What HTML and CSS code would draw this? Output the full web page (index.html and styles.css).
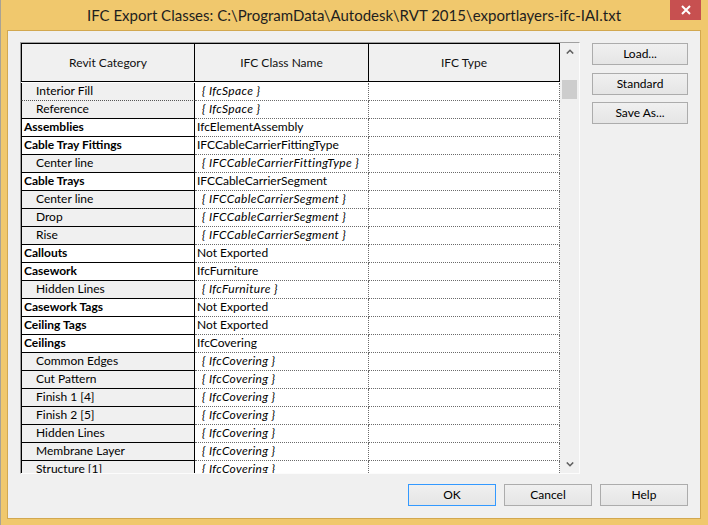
FILE: index.html
```html
<!DOCTYPE html>
<html>
<head>
<meta charset="utf-8">
<link rel="stylesheet" href="styles.css">
</head>
<body>
<div class="window">
  <div class="titlebar">
    <span class="title">IFC Export Classes: C:\ProgramData\Autodesk\RVT 2015\exportlayers-ifc-IAI.txt</span>
    <div class="close">
      <svg width="10" height="10" viewBox="0 0 10 10"><path d="M1 1 L9 9 M9 1 L1 9" stroke="#fff" stroke-width="2"/></svg>
    </div>
  </div>
  <div class="client">
    <div class="main">
      <div class="grid">
        <div class="table">
          <div class="head">
            <div class="hc c1">Revit Category</div>
            <div class="hc c2">IFC Class Name</div>
            <div class="hc c3">IFC Type</div>
          </div>
          <div class="body">
            <div class="row child first"><div class="cell c1">Interior Fill</div><div class="cell c2 inh">{ IfcSpace }</div><div class="cell c3"></div></div>
            <div class="row child"><div class="cell c1">Reference</div><div class="cell c2 inh">{ IfcSpace }</div><div class="cell c3"></div></div>
            <div class="row parent"><div class="cell c1">Assemblies</div><div class="cell c2">IfcElementAssembly</div><div class="cell c3"></div></div>
            <div class="row parent"><div class="cell c1">Cable Tray Fittings</div><div class="cell c2">IFCCableCarrierFittingType</div><div class="cell c3"></div></div>
            <div class="row child"><div class="cell c1">Center line</div><div class="cell c2 inh">{ IFCCableCarrierFittingType }</div><div class="cell c3"></div></div>
            <div class="row parent"><div class="cell c1">Cable Trays</div><div class="cell c2">IFCCableCarrierSegment</div><div class="cell c3"></div></div>
            <div class="row child"><div class="cell c1">Center line</div><div class="cell c2 inh">{ IFCCableCarrierSegment }</div><div class="cell c3"></div></div>
            <div class="row child"><div class="cell c1">Drop</div><div class="cell c2 inh">{ IFCCableCarrierSegment }</div><div class="cell c3"></div></div>
            <div class="row child"><div class="cell c1">Rise</div><div class="cell c2 inh">{ IFCCableCarrierSegment }</div><div class="cell c3"></div></div>
            <div class="row parent"><div class="cell c1">Callouts</div><div class="cell c2">Not Exported</div><div class="cell c3"></div></div>
            <div class="row parent"><div class="cell c1">Casework</div><div class="cell c2">IfcFurniture</div><div class="cell c3"></div></div>
            <div class="row child"><div class="cell c1">Hidden Lines</div><div class="cell c2 inh">{ IfcFurniture }</div><div class="cell c3"></div></div>
            <div class="row parent"><div class="cell c1">Casework Tags</div><div class="cell c2">Not Exported</div><div class="cell c3"></div></div>
            <div class="row parent"><div class="cell c1">Ceiling Tags</div><div class="cell c2">Not Exported</div><div class="cell c3"></div></div>
            <div class="row parent"><div class="cell c1">Ceilings</div><div class="cell c2">IfcCovering</div><div class="cell c3"></div></div>
            <div class="row child"><div class="cell c1">Common Edges</div><div class="cell c2 inh">{ IfcCovering }</div><div class="cell c3"></div></div>
            <div class="row child"><div class="cell c1">Cut Pattern</div><div class="cell c2 inh">{ IfcCovering }</div><div class="cell c3"></div></div>
            <div class="row child"><div class="cell c1">Finish 1 [4]</div><div class="cell c2 inh">{ IfcCovering }</div><div class="cell c3"></div></div>
            <div class="row child"><div class="cell c1">Finish 2 [5]</div><div class="cell c2 inh">{ IfcCovering }</div><div class="cell c3"></div></div>
            <div class="row child"><div class="cell c1">Hidden Lines</div><div class="cell c2 inh">{ IfcCovering }</div><div class="cell c3"></div></div>
            <div class="row child"><div class="cell c1">Membrane Layer</div><div class="cell c2 inh">{ IfcCovering }</div><div class="cell c3"></div></div>
            <div class="row child"><div class="cell c1">Structure [1]</div><div class="cell c2 inh">{ IfcCovering }</div><div class="cell c3"></div></div>
          </div>
        </div>
        <div class="vscroll">
          <div class="sbtn"><svg width="8" height="5" viewBox="0 0 8 5"><path d="M0.8 4.5 L4 1.3 L7.2 4.5" fill="none" stroke="#606060" stroke-width="1.6"/></svg></div>
          <div class="track"><div class="thumb"></div></div>
          <div class="sbtn"><svg width="8" height="5" viewBox="0 0 8 5"><path d="M0.8 0.5 L4 3.7 L7.2 0.5" fill="none" stroke="#606060" stroke-width="1.6"/></svg></div>
        </div>
      </div>
      <div class="side">
        <button class="btn side-btn">Load...</button>
        <button class="btn side-btn">Standard</button>
        <button class="btn side-btn">Save As...</button>
      </div>
    </div>
    <div class="footer">
      <button class="btn foot-btn default">OK</button>
      <button class="btn foot-btn">Cancel</button>
      <button class="btn foot-btn">Help</button>
    </div>
  </div>
</div>
</body>
</html>
```
FILE: styles.css
```css
html, body {
  margin: 0;
  padding: 0;
  background: #f0c86d;
}
body {
  font-family: Lato, "Noto Sans", sans-serif;
  font-size: 12px;
  color: #000;
}
.window {
  width: 708px;
  height: 525px;
  box-sizing: border-box;
  background: #f0c86d;
  border-left: 1px solid #a9a294;
  display: flex;
  flex-direction: column;
}
.titlebar {
  height: 30px;
  display: flex;
  align-items: flex-start;
  flex: none;
}
.title {
  flex: 1;
  padding-left: 37px;
  text-align: center;
  line-height: 30px;
  font-size: 15px;
  color: #1e1e1e;
  white-space: nowrap;
}
.close {
  margin-right: 7px;
  width: 31px;
  height: 20px;
  background: #c75050;
  display: flex;
  align-items: center;
  justify-content: center;
}
.close svg { display: block; }
.client {
  flex: 1;
  margin: 0 7px 6px 6px;
  border: 1px solid #d2a850;
  background: #f0f0f0;
  padding: 11px 12px 12px 12px;
  display: flex;
  flex-direction: column;
  gap: 10px;
  min-height: 0;
}
.main {
  display: flex;
  gap: 12px;
}
.grid {
  width: 560px;
  height: 432px;
  box-sizing: border-box;
  border-top: 1px solid #a0a0a0;
  border-left: 1px solid #a0a0a0;
  border-right: 1px solid #fcfcfc;
  border-bottom: 1px solid #fcfcfc;
  background: #fff;
  display: flex;
  overflow: hidden;
}
.table {
  width: 539px;
  flex: none;
  overflow: hidden;
}
.head {
  display: flex;
  height: 39px;
  box-sizing: border-box;
  border-top: 1px solid #000;
  border-bottom: 1px solid #000;
  background: #f0f0f0;
}
.hc {
  box-sizing: border-box;
  border-right: 1px solid #000;
  display: flex;
  align-items: center;
  justify-content: center;
  color: #111;
}
.c1 { width: 174px; border-left: 1px solid #000; }
.c2 { width: 174px; }
.c3 { width: 191px; }
.body {
  padding-top: 1px;
}
.row {
  display: flex;
  height: 18px;
}
.cell {
  box-sizing: border-box;
  height: 18px;
  line-height: 16px;
  white-space: nowrap;
  overflow: hidden;
}
.cell.c1 {
  border-right: 1px solid #000;
  border-bottom: 1px solid #000;
}
.cell.c2, .cell.c3 {
  border-right: 1px dotted #6a6a6a;
  border-bottom: 1px dotted #6a6a6a;
}
.cell.c2 { padding-left: 2px; }
.cell.inh {
  font-style: italic;
  padding-left: 7px;
  letter-spacing: 0.35px;
}
.row.child .c1 {
  background: #f0f0f0;
  padding-left: 14px;
}
.row.first .c1 { border-bottom-style: dotted; border-bottom-color: #555; }
.row.parent .c1 {
  padding-left: 2px;
  font-weight: 700;
}
.vscroll {
  flex: 1;
  background: #f0f0f0;
  display: flex;
  flex-direction: column;
}
.sbtn {
  height: 17px;
  display: flex;
  align-items: center;
  justify-content: center;
}
.sbtn svg { display: block; }
.track {
  flex: 1;
  padding: 20px 2px 0 2px;
}
.thumb {
  height: 19px;
  background: #cdcdcd;
}
.side {
  display: flex;
  flex-direction: column;
  padding-top: 1px;
  gap: 8px;
}
.btn {
  font-family: Lato, "Noto Sans", sans-serif;
  font-size: 12px;
  color: #000;
  height: 22px;
  box-sizing: border-box;
  border: 1px solid #acacac;
  background: linear-gradient(#f0f0f0, #e5e5e5);
  padding: 0;
  margin: 0;
  line-height: 20px;
  border-radius: 0;
}
.side-btn { width: 96px; }
.side-btn:last-child { margin-top: -1px; }
.footer {
  display: flex;
  justify-content: flex-end;
  gap: 8px;
}
.foot-btn { width: 88px; }
.foot-btn.default { border-color: #3399ff; }
```
